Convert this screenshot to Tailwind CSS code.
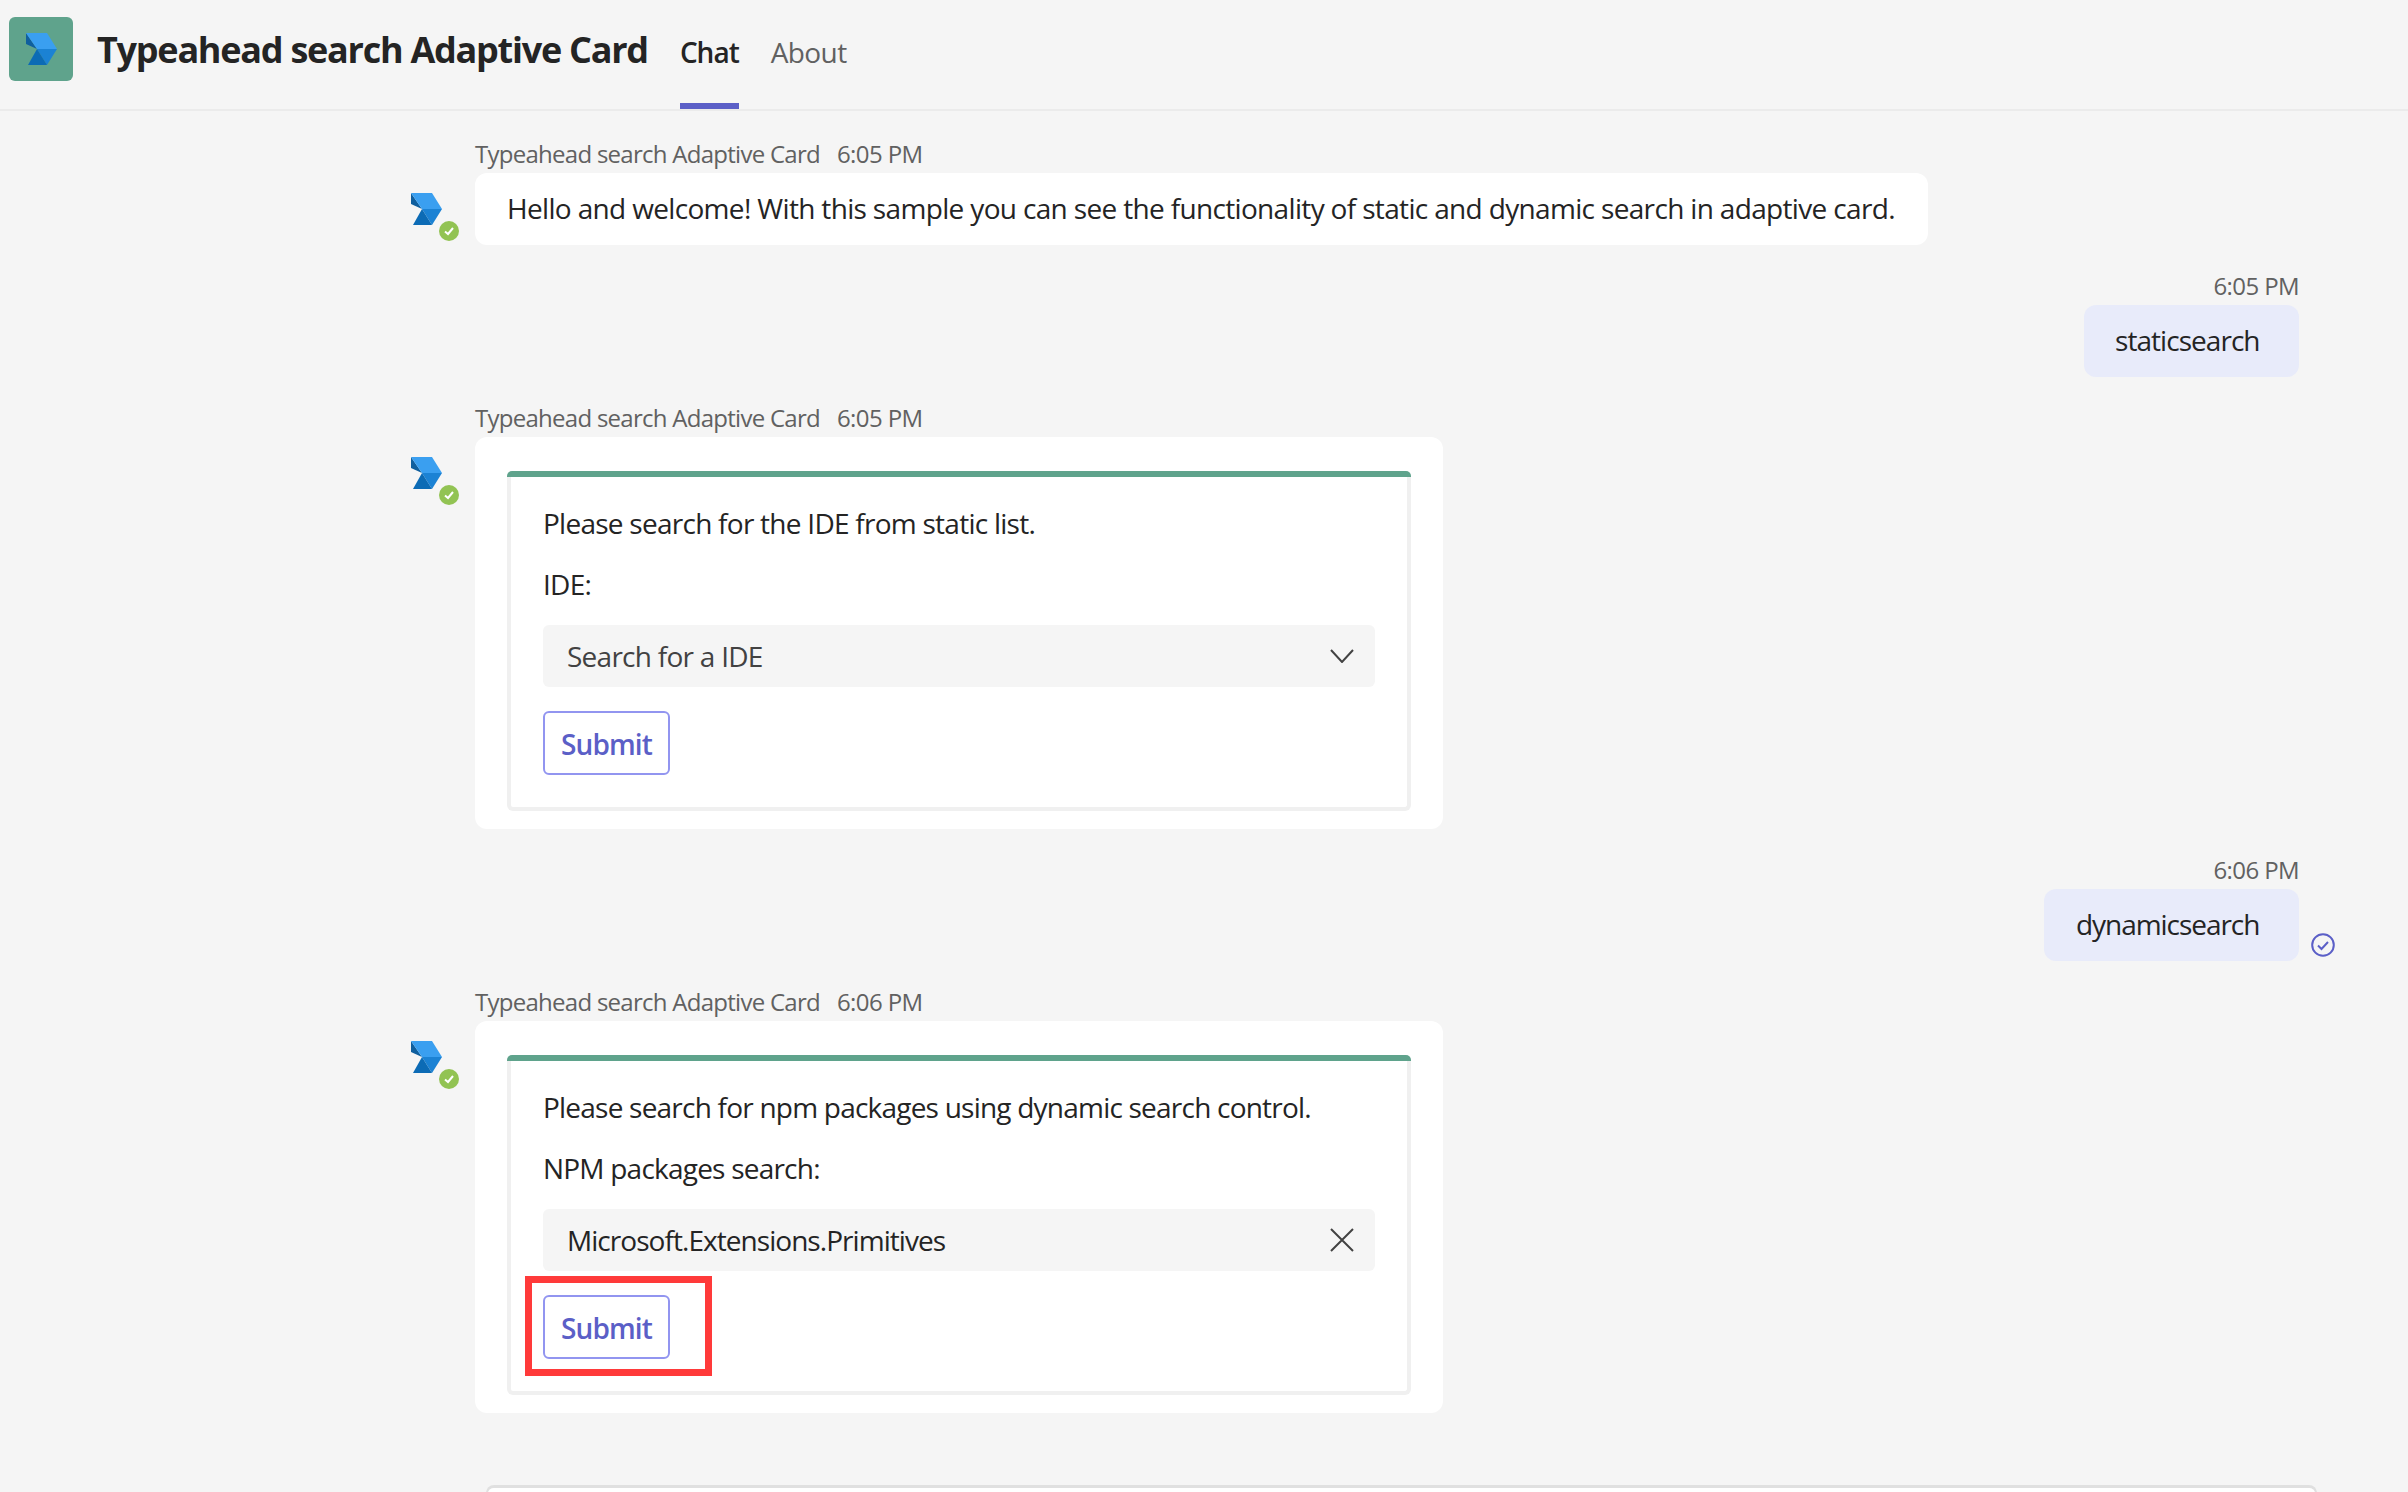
<!DOCTYPE html>
<html lang="en">

<head>
  <meta charset="UTF-8">
  <title>Typeahead search Adaptive Card</title>
  <script src="https://cdn.jsdelivr.net/npm/@tailwindcss/browser@4"></script>
</head>

<body class="bg-[#f5f5f5] h-[1492px] overflow-hidden font-['Open_Sans',sans-serif] text-[#242424]">
  <!-- header -->
  <header class="flex h-[111px] border-b-2 border-[#ebebeb]">
    <div class="flex items-center justify-center w-[64px] h-[64px] ml-[9px] mt-[17px] rounded-[6px] bg-[#5fa38c]">
      <svg width="31" height="33" viewBox="0 0 31 33">
        <polygon points="0,0 0,11 11,16" fill="#0f5f9e" />
        <polygon points="0,0 21,0 31,16 11,16" fill="#3a9ff0" />
        <polygon points="11,16 31,16 21,32" fill="#1b82d4" />
        <polygon points="11,16 21,32 2,32" fill="#0c6bb5" />
      </svg>
    </div>
    <h1 class="ml-[24px] mt-[28px] h-[44px] leading-[44px] text-[36px] font-bold tracking-[-1.25px]">Typeahead search Adaptive Card</h1>
    <div class="flex ml-[32px] gap-[32px] h-[109px] text-[28px]">
      <div class="flex items-center font-semibold border-b-[6px] border-[#5b5fc7] tracking-[-1px]">Chat</div>
      <div class="flex items-center text-[#616161] pb-[6px] tracking-[-0.6px]">About</div>
    </div>
  </header>

  <main class="pt-[36px]">
    <!-- welcome -->
    <section class="flex pl-[411px]">
      <div class="relative w-[64px] h-[33px] mt-[46px] shrink-0">
        <svg width="31" height="33" viewBox="0 0 31 33">
          <polygon points="0,0 0,11 11,16" fill="#0f5f9e" />
          <polygon points="0,0 21,0 31,16 11,16" fill="#3a9ff0" />
          <polygon points="11,16 31,16 21,32" fill="#1b82d4" />
          <polygon points="11,16 21,32 2,32" fill="#0c6bb5" />
        </svg>
        <span class="absolute left-[28px] top-[28px] w-[20px] h-[20px] rounded-full bg-[#92c353] flex items-center justify-center">
          <svg width="12" height="12" viewBox="0 0 12 12"><path d="M2 6.5 L5 9 L10 3" fill="none" stroke="#fff" stroke-width="2" /></svg>
        </span>
      </div>
      <div>
        <div class="h-[26px] leading-[14px] text-[24px] text-[#616161] tracking-[-0.73px] whitespace-nowrap">Typeahead search Adaptive Card<span class="ml-[17px] tracking-[-0.6px]">6:05 PM</span></div>
        <div class="w-[1453px] h-[72px] px-[32px] rounded-[12px] bg-white text-[28px] leading-[70px] tracking-[-0.66px] whitespace-nowrap">Hello and welcome! With this sample you can see the functionality of static and dynamic search in adaptive card.</div>
      </div>
    </section>

    <section class="flex flex-col items-end pr-[109px] mt-[34px]">
      <div class="h-[26px] leading-[14px] text-[24px] text-[#616161] tracking-[-0.6px]">6:05 PM</div>
      <div class="w-[215px] h-[72px] pl-[31px] rounded-[12px] bg-[#e8ebfa] text-[28px] leading-[70px] tracking-[-0.95px]">staticsearch</div>
    </section>

    <!-- static search card -->
    <section class="flex pl-[411px] mt-[34px]">
      <div class="relative w-[64px] h-[33px] mt-[46px] shrink-0">
        <svg width="31" height="33" viewBox="0 0 31 33">
          <polygon points="0,0 0,11 11,16" fill="#0f5f9e" />
          <polygon points="0,0 21,0 31,16 11,16" fill="#3a9ff0" />
          <polygon points="11,16 31,16 21,32" fill="#1b82d4" />
          <polygon points="11,16 21,32 2,32" fill="#0c6bb5" />
        </svg>
        <span class="absolute left-[28px] top-[28px] w-[20px] h-[20px] rounded-full bg-[#92c353] flex items-center justify-center">
          <svg width="12" height="12" viewBox="0 0 12 12"><path d="M2 6.5 L5 9 L10 3" fill="none" stroke="#fff" stroke-width="2" /></svg>
        </span>
      </div>
      <div>
        <div class="h-[26px] leading-[14px] text-[24px] text-[#616161] tracking-[-0.73px] whitespace-nowrap">Typeahead search Adaptive Card<span class="ml-[17px] tracking-[-0.6px]">6:05 PM</span></div>
        <div class="w-[968px] h-[392px] pt-[34px] px-[32px] pb-[18px] rounded-[12px] bg-white">
          <div class="h-[6px] rounded-t-[5px] bg-[#5fa38c]"></div>
          <div class="h-[334px] border-x-4 border-b-4 border-[#f0f0f0] rounded-b-[6px] pt-[26px] px-[32px] text-[28px] leading-[40px] tracking-[-0.74px]">
            <p>Please search for the IDE from static list.</p>
            <p class="mt-[21px]">IDE:</p>
            <div class="flex items-center justify-between h-[62px] mt-[21px] pl-[24px] pr-[21px] rounded-[6px] bg-[#f5f5f5] text-[#424242]">
              <span>Search for a IDE</span>
              <svg width="24" height="14" viewBox="0 0 24 14"><path d="M1 1 L12 13 L23 1" fill="none" stroke="#424242" stroke-width="2" /></svg>
            </div>
            <button class="block w-[127px] h-[64px] pt-[2px] mt-[24px] rounded-[6px] border-2 border-[#9295f0] bg-white text-[#5b5fc7] font-semibold text-center tracking-[-0.85px]">Submit</button>
          </div>
        </div>
      </div>
    </section>

    <section class="flex flex-col items-end pr-[109px] mt-[34px]">
      <div class="h-[26px] leading-[14px] text-[24px] text-[#616161] tracking-[-0.6px]">6:06 PM</div>
      <div class="relative w-[255px] h-[72px] pl-[32px] rounded-[12px] bg-[#e8ebfa] text-[28px] leading-[70px] tracking-[-1.05px]">dynamicsearch
        <svg class="absolute -right-[36px] top-[44px]" width="24" height="24" viewBox="0 0 24 24">
          <circle cx="12" cy="12" r="10.8" fill="none" stroke="#5b5fc7" stroke-width="2" />
          <path d="M7 12.5 L10.5 16 L17 9" fill="none" stroke="#5b5fc7" stroke-width="2" />
        </svg>
      </div>
    </section>

    <!-- dynamic search card -->
    <section class="flex pl-[411px] mt-[34px]">
      <div class="relative w-[64px] h-[33px] mt-[46px] shrink-0">
        <svg width="31" height="33" viewBox="0 0 31 33">
          <polygon points="0,0 0,11 11,16" fill="#0f5f9e" />
          <polygon points="0,0 21,0 31,16 11,16" fill="#3a9ff0" />
          <polygon points="11,16 31,16 21,32" fill="#1b82d4" />
          <polygon points="11,16 21,32 2,32" fill="#0c6bb5" />
        </svg>
        <span class="absolute left-[28px] top-[28px] w-[20px] h-[20px] rounded-full bg-[#92c353] flex items-center justify-center">
          <svg width="12" height="12" viewBox="0 0 12 12"><path d="M2 6.5 L5 9 L10 3" fill="none" stroke="#fff" stroke-width="2" /></svg>
        </span>
      </div>
      <div>
        <div class="h-[26px] leading-[14px] text-[24px] text-[#616161] tracking-[-0.73px] whitespace-nowrap">Typeahead search Adaptive Card<span class="ml-[17px] tracking-[-0.6px]">6:06 PM</span></div>
        <div class="w-[968px] h-[392px] pt-[34px] px-[32px] pb-[18px] rounded-[12px] bg-white">
          <div class="h-[6px] rounded-t-[5px] bg-[#5fa38c]"></div>
          <div class="h-[334px] border-x-4 border-b-4 border-[#f0f0f0] rounded-b-[6px] pt-[26px] px-[32px] text-[28px] leading-[40px] tracking-[-0.78px]">
            <p>Please search for npm packages using dynamic search control.</p>
            <p class="mt-[21px]">NPM packages search:</p>
            <div class="flex items-center justify-between h-[62px] mt-[21px] pl-[24px] pr-[21px] rounded-[6px] bg-[#f5f5f5] tracking-[-0.95px]">
              <span>Microsoft.Extensions.Primitives</span>
              <svg width="24" height="24" viewBox="0 0 24 24"><path d="M1 1 L23 23 M23 1 L1 23" fill="none" stroke="#424242" stroke-width="2" /></svg>
            </div>
            <div class="relative w-[127px] h-[64px] mt-[24px]">
              <button class="block w-[127px] h-[64px] pt-[2px] rounded-[6px] border-2 border-[#9295f0] bg-white text-[#5b5fc7] font-semibold text-center tracking-[-0.85px]">Submit</button>
              <div class="absolute -left-[18px] -top-[19px] w-[187px] h-[100px] border-[7px] border-[#ff3a3a]"></div>
            </div>
          </div>
        </div>
      </div>
    </section>

    <!-- compose box -->
    <div class="ml-[486px] mt-[72px] w-[1831px] h-[40px] rounded-t-[8px] border-x-2 border-t-[3px] border-[#e0e0e0] bg-white"></div>
  </main>
</body>

</html>
